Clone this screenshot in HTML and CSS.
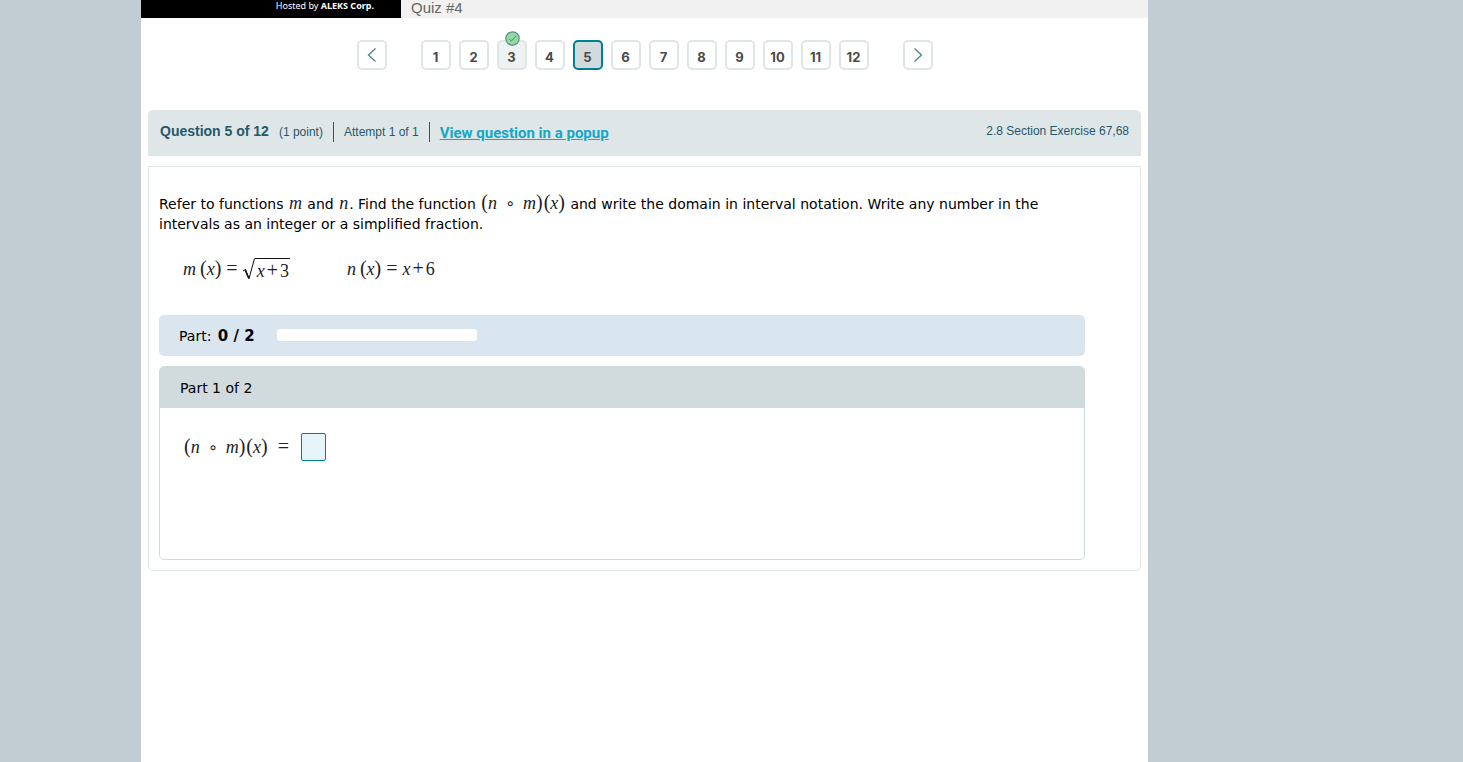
FILE: index.html
```html
<!DOCTYPE html>
<html lang="en">
<head>
<meta charset="utf-8">
<meta name="viewport" content="width=device-width, initial-scale=1">
<title>Quiz #4</title>
<link rel="stylesheet" href="styles.css">
</head>
<body>
<div class="page">
  <header class="topbar">
    <div class="brand">Hosted by <strong>ALEKS Corp.</strong></div>
    <h1 class="quiz-title">Quiz #4</h1>
  </header>

  <nav class="pager" aria-label="Questions">
    <button class="tile" type="button" aria-label="Previous question"><svg class="chevron" viewBox="0 0 10 16"><path d="M8.500 1.500 1.500 8l7 6.500"/></svg></button>
    <div class="numbers">
      <button class="tile" type="button">1</button>
      <button class="tile" type="button">2</button>
      <button class="tile tile-done" type="button">3<svg class="badge" viewBox="0 0 15 15" aria-hidden="true"><circle cx="7.500" cy="7.500" r="6.700" fill="#95dba1" stroke="#56938a" stroke-width="1.200"/><path d="M4 7.800 6.400 10 11 5" fill="none" stroke="#43877f"/></svg></button>
      <button class="tile" type="button">4</button>
      <button class="tile tile-current" type="button" aria-current="page">5</button>
      <button class="tile" type="button">6</button>
      <button class="tile" type="button">7</button>
      <button class="tile" type="button">8</button>
      <button class="tile" type="button">9</button>
      <button class="tile" type="button">10</button>
      <button class="tile" type="button">11</button>
      <button class="tile" type="button">12</button>
    </div>
    <button class="tile" type="button" aria-label="Next question"><svg class="chevron" viewBox="0 0 10 16"><path d="M1.500 1.500 8.500 8l-7 6.500"/></svg></button>
  </nav>

  <main class="content">
    <div class="question-bar">
      <h2 class="question-number">Question 5 of 12</h2>
      <span class="points">(1 point)</span>
      <span class="attempt">Attempt 1 of 1</span>
      <a class="popup-link" href="#popup">View question in a popup</a>
      <span class="section">2.8 Section Exercise 67,68</span>
    </div>

    <section class="question">
      <p class="prompt">Refer to functions <i class="var">m</i> and <i class="var">n</i>. Find the function <span class="math"><span class="paren">(</span><i>n</i><span class="compose">∘</span><i>m</i><span class="paren">)</span><span class="paren">(</span><i>x</i><span class="paren">)</span></span> and write the domain in interval notation. Write any number in the intervals as an integer or a simplified fraction.</p>

      <div class="definitions">
        <div class="definition"><i>m</i><span class="arg"><span class="paren">(</span><i>x</i><span class="paren">)</span></span><span class="equals">=</span><span class="root"><svg class="radical" viewBox="0 0 12 22" aria-hidden="true"><path d="M0 13 2.500 11.500 6 20.500 11.500 .5" fill="none" stroke="#111"/><path d="M2.200 12 5.800 20.500" stroke="#111" stroke-width="1.500"/></svg><span class="radicand"><i>x</i><span class="plus">+</span>3</span></span></div>
        <div class="definition"><i>n</i><span class="arg"><span class="paren">(</span><i>x</i><span class="paren">)</span></span><span class="equals">=</span><i>x</i><span class="plus">+</span>6</div>
      </div>

      <div class="progress">
        <span class="progress-label">Part: <strong>0 / 2</strong></span>
        <div class="track" role="progressbar" aria-label="Parts completed" aria-valuemin="0" aria-valuemax="2" aria-valuenow="0"></div>
      </div>

      <section class="part">
        <h3 class="part-title">Part 1 of 2</h3>
        <div class="part-body">
          <label class="math" for="answer"><span class="paren">(</span><i>n</i><span class="compose">∘</span><i>m</i><span class="paren">)</span><span class="paren">(</span><i>x</i><span class="paren">)</span><span class="answer-equals">=</span></label>
          <input class="answer" id="answer" type="text">
        </div>
      </section>
    </section>
  </main>
</div>
</body>
</html>
```

FILE: styles.css
```css
* {
  box-sizing: border-box;
}

body {
  margin: 0;
  background: #c1cdd2;
  color: #000;
  font: 14px/20px "DejaVu Sans", sans-serif;
  display: grid;
  grid-template-columns: 141fr 1007fr 315fr;
}

.page {
  grid-column: 2;
  min-height: 100vh;
  background: #fff;
}

.topbar {
  display: flex;
  height: 18px;
  background: #f1f1f1;
}

.brand {
  width: 260px;
  padding-right: 27px;
  background: #000;
  color: #fff;
  font: 9px/12px "Noto Sans", sans-serif;
  text-align: right;
}

.quiz-title {
  margin: 0 0 0 10px;
  color: #666;
  font: 15px/16px "Liberation Sans", sans-serif;
}

.pager {
  display: flex;
  justify-content: center;
  gap: 34px;
  padding: 22px 0 40px;
}

.numbers {
  display: flex;
  gap: 8px;
}

.tile {
  position: relative;
  display: grid;
  place-items: center;
  width: 30px;
  height: 30px;
  padding: 4px 0 0;
  border: 2px solid #dfe6e8;
  border-radius: 5px;
  background: #fff;
  color: #4a4a4a;
  font: bold 13px/20px "Inter", sans-serif;
}

.tile-done {
  background: #eef2f3;
}

.tile-current {
  border-color: #007e92;
  background: #d1dadd;
}

.badge {
  position: absolute;
  top: -11px;
  left: 6px;
  width: 15px;
  height: 15px;
}

.chevron {
  width: 10px;
  height: 16px;
  margin-bottom: 4px;
  fill: none;
  stroke: #4f7f91;
  stroke-width: 1.3;
}

.content {
  padding: 0 7px;
}

.question-bar {
  display: flex;
  align-items: flex-start;
  height: 46px;
  padding: 12px 12px 0;
  border-radius: 5px 5px 0 0;
  background: #dfe6e8;
  color: #25586a;
  font: 12px/20px "Liberation Sans", sans-serif;
}

.question-number {
  margin: 0 10px 0 0;
  font: bold 14px/18px "Liberation Sans", sans-serif;
}

.points {
  padding-right: 10px;
  border-right: 1px solid #25586a;
}

.attempt {
  padding: 0 10px;
  border-right: 1px solid #25586a;
}

.popup-link {
  margin-left: 10px;
  color: #12a8c6;
  font: bold 15px/22px "Roboto", sans-serif;
}

.section {
  margin-left: auto;
  line-height: 18px;
}

.question {
  margin-top: 10px;
  padding: 27px 55px 10px 10px;
  border: 1px solid #dfe6e8;
  border-radius: 0 0 5px 5px;
}

.prompt {
  margin: 0;
}

.var,
.math,
.definition {
  color: #222;
  font-family: "Liberation Serif", serif;
  font-size: 18px;
}

.var,
.math {
  margin: 0 1px;
  line-height: 16px;
  white-space: nowrap;
}

.paren {
  font-size: 20px;
  line-height: 16px;
}

.paren + .paren {
  margin-left: 1px;
}

.compose {
  margin: 0 8px;
  font-family: "DejaVu Sans", sans-serif;
  font-size: 16px;
}

.definitions {
  display: flex;
  gap: 57px;
  padding: 24px 0 32px 24px;
}

.definition {
  height: 25px;
  line-height: 20px;
}

.arg {
  margin-left: 4px;
}

.equals {
  margin: 0 5px;
  font-size: 20px;
}

.plus {
  margin: 0 2px;
  font-size: 20px;
}

.root {
  display: inline-flex;
  vertical-align: top;
}

.radical {
  width: 12px;
  height: 22px;
}

.radicand {
  height: 22px;
  padding: 1px 1px 0 2px;
  border-top: 1px solid #111;
}

.progress {
  display: flex;
  gap: 20px;
  height: 41px;
  padding: 11px 20px;
  border-radius: 5px;
  background: #dae6ef;
}

.progress-label {
  min-width: 78px;
}

.progress-label strong {
  margin-left: 2px;
  font-size: 15px;
}

.track {
  width: 200px;
  height: 12px;
  margin-top: 3px;
  border-radius: 3px;
  background: #fff;
}

.part {
  margin-top: 10px;
  overflow: hidden;
  border: 1px solid #d1dadc;
  border-radius: 5px;
}

.part-title {
  margin: 0;
  padding: 11px 20px 10px;
  background: #d1dadc;
  font: inherit;
}

.part-body {
  display: flex;
  align-items: center;
  gap: 11px;
  padding: 25px 23px 98px;
}

.answer-equals {
  margin-left: 10px;
  font-size: 20px;
}

.answer {
  width: 25px;
  height: 28px;
  padding: 0 4px;
  border: 1px solid #008094;
  border-radius: 2px;
  background: #e6f4fa;
  font: inherit;
}
```
